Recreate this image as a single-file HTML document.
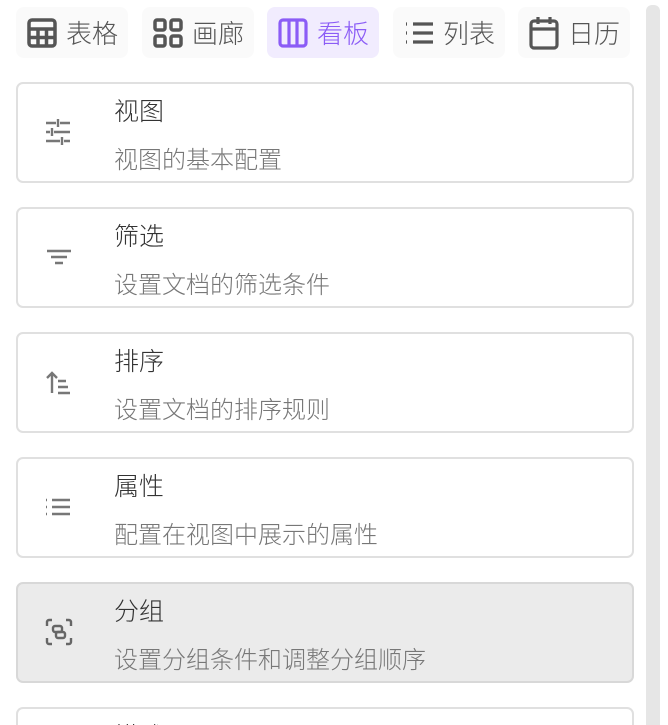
<!DOCTYPE html>
<html><head><meta charset="utf-8"><style>
html,body{margin:0;width:668px;height:725px;overflow:hidden}
body{background:#fff;font-family:"Liberation Sans","Noto Sans CJK SC",sans-serif;position:relative;font-weight:300}
.tab{position:absolute;top:7px;height:51px;width:112px;border-radius:8px;background:#fafafa;display:flex;align-items:center;color:#555;font-size:26px}
.tab svg{margin-left:10px;margin-right:8px}
.tab.on{background:#f1ecfe;color:#8b5cf6}
.card{position:absolute;left:16px;width:614px;height:97px;border:2px solid #e0e0e0;border-radius:7px;background:#fff;overflow:hidden}
.card.sel{background:#ebebeb;border-color:#d8d8d8}
.t{position:absolute;left:96px;top:8px;font-size:25px;color:#333;font-weight:300}
.d{position:absolute;left:96px;top:56px;font-size:24px;color:#777;font-weight:300}
.ic{position:absolute;left:26px;top:33px}
.sb{position:absolute;left:646px;top:5px;width:14px;height:720px;background:#e6e6e6;border-radius:6px 6px 0 0}
</style></head><body>
<div class="tab" style="left:16px"><svg width="32" height="32" viewBox="0 0 32 32" fill="none" stroke="#555" stroke-width="3.5"><rect x="3" y="3" width="26" height="26" rx="3"/><path d="M3 12h26M3 20.5h26M12 12v17M20.5 12v17"/></svg>表格</div>
<div class="tab" style="left:142px"><svg width="32" height="32" viewBox="0 0 32 32" fill="none" stroke="#555" stroke-width="3.5"><rect x="3" y="3" width="10" height="10" rx="2"/><rect x="19" y="3" width="10" height="10" rx="2"/><rect x="3" y="19" width="10" height="10" rx="2"/><rect x="19" y="19" width="10" height="10" rx="2"/></svg>画廊</div>
<div class="tab on" style="left:267px"><svg width="32" height="32" viewBox="0 0 32 32" fill="none" stroke="#8b5cf6" stroke-width="3.2"><rect x="3" y="3" width="26" height="26" rx="3"/><path d="M12 3v26M20 3v26"/></svg>看板</div>
<div class="tab" style="left:393px"><svg width="32" height="32" viewBox="0 0 32 32" fill="none" stroke="#555" stroke-width="3.2"><path d="M3 7h1M3 16h1M3 25h1M10 7h20M10 16h20M10 25h20"/></svg>列表</div>
<div class="tab" style="left:518px"><svg width="32" height="34" viewBox="0 0 32 34" fill="none" stroke="#555" stroke-width="3.2"><rect x="3" y="5" width="26" height="27" rx="3"/><path d="M3 13h26M10 1v7M22 1v7"/></svg>日历</div>
<div class="sb"></div>

<div class="card" style="top:82px"><svg class="ic" width="30" height="30" viewBox="0 0 30 30" fill="none" stroke="#777" stroke-width="2.4"><path d="M2 6h10M16 6h10M14 2v8M2 15h4M10 15h16M8 11v8M2 24h14M20 24h6M18 20v8"/></svg><div class="t">视图</div><div class="d">视图的基本配置</div></div>
<div class="card" style="top:207px"><svg class="ic" width="30" height="30" viewBox="0 0 30 30" fill="none" stroke="#777" stroke-width="2.4"><path d="M3 9h24M7 15h16M11 21h8"/></svg><div class="t">筛选</div><div class="d">设置文档的筛选条件</div></div>
<div class="card" style="top:332px"><svg class="ic" width="30" height="30" viewBox="0 0 30 30" fill="none" stroke="#777" stroke-width="2.4"><path d="M8 26V6M3 11l5-5 5 5M14 14h8M14 20h10M14 26h12"/></svg><div class="t">排序</div><div class="d">设置文档的排序规则</div></div>
<div class="card" style="top:457px"><svg class="ic" width="30" height="30" viewBox="0 0 30 30" fill="none" stroke="#777" stroke-width="2.4"><path d="M2 8h1M2 15h1M2 22h1M8 8h18M8 15h18M8 22h18"/></svg><div class="t">属性</div><div class="d">配置在视图中展示的属性</div></div>
<div class="card sel" style="top:582px"><svg class="ic" width="30" height="30" viewBox="0 0 30 30" fill="none" stroke="#666" stroke-width="2.4"><path d="M3 9V5a2 2 0 0 1 2-2h3M22 3h3a2 2 0 0 1 2 2v4M27 21v4a2 2 0 0 1-2 2h-3M8 27H5a2 2 0 0 1-2-2v-4"/><rect x="9" y="9" width="9" height="6" rx="2"/><rect x="12" y="15" width="9" height="6" rx="2"/></svg><div class="t">分组</div><div class="d">设置分组条件和调整分组顺序</div></div>
<div class="card" style="top:707px;height:30px;border-bottom:none"><div class="t">描述</div></div>
</body></html>
